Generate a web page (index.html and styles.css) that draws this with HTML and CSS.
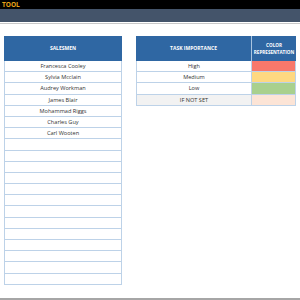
FILE: index.html
```html
<!DOCTYPE html>
<html>
<head>
<meta charset="utf-8">
<link rel="stylesheet" href="styles.css">
</head>
<body>
<div class="topbar">TOOL</div>
<div class="subbar"></div>
<div class="sep"></div>
<main class="sheet">
  <div class="salesmen">
    <div class="head">SALESMEN</div>
    <div class="row">Francesca Cooley</div>
    <div class="row">Sylvia Mcclain</div>
    <div class="row">Audrey Workman</div>
    <div class="row">James Blair</div>
    <div class="row">Mohammad Riggs</div>
    <div class="row">Charles Guy</div>
    <div class="row">Carl Wooten</div>
    <div class="row"></div>
    <div class="row"></div>
    <div class="row"></div>
    <div class="row"></div>
    <div class="row"></div>
    <div class="row"></div>
    <div class="row"></div>
    <div class="row"></div>
    <div class="row"></div>
    <div class="row"></div>
    <div class="row"></div>
    <div class="row"></div>
    <div class="row"></div>
  </div>
  <div class="importance">
    <div class="head">TASK IMPORTANCE</div>
    <div class="head color-head">COLOR<br>REPRESENTATION</div>
    <div class="cell">High</div><div class="swatch high"></div>
    <div class="cell">Medium</div><div class="swatch medium"></div>
    <div class="cell">Low</div><div class="swatch low"></div>
    <div class="cell notset">IF NOT SET</div><div class="swatch unset"></div>
  </div>
</main>
<div class="footer"></div>
</body>
</html>
```
FILE: styles.css
```css
html, body {
  margin: 0;
  padding: 0;
  width: 300px;
  height: 300px;
  overflow: hidden;
  background: #ffffff;
  font-family: "Open Sans", "Liberation Sans", sans-serif;
}
.topbar {
  height: 9px;
  background: #000000;
  color: #e8a317;
  font-size: 6.5px;
  font-weight: 700;
  line-height: 9px;
  padding-left: 2px;
  box-sizing: border-box;
}
.subbar {
  height: 13px;
  background: #44546a;
}
.sep {
  height: 1px;
  margin-top: 1px;
  background: #c8c8c8;
}
.sheet {
  height: 274px;
  box-sizing: border-box;
  padding: 12px 0 0 4px;
  display: flex;
  align-items: flex-start;
  gap: 14px;
}
.salesmen {
  width: 118px;
  display: flex;
  flex-direction: column;
  border-left: 1px solid #bdd2e8;
  border-right: 1px solid #bdd2e8;
  box-sizing: border-box;
}
.head {
  background: #2f67a3;
  color: #ffffff;
  font-size: 5px;
  font-weight: 700;
  height: 25px;
  display: flex;
  align-items: center;
  justify-content: center;
  text-align: center;
  line-height: 7px;
}
.salesmen .head {
  margin: 0 -1px;
}
.row {
  height: 11.2px;
  box-sizing: border-box;
  border-bottom: 1px solid #bdd2e8;
  font-size: 5.6px;
  color: #333333;
  display: flex;
  align-items: center;
  justify-content: center;
}
.importance {
  width: 160px;
  display: grid;
  grid-template-columns: 115px 45px;
  grid-auto-rows: 11.2px;
}
.importance .head {
  grid-row: span 1;
  height: 25px;
}
.importance {
  grid-template-rows: 25px;
}
.color-head {
  border-left: 1px solid #a9c4e0;
  font-size: 4.6px;
}
.cell {
  box-sizing: border-box;
  border-left: 1px solid #bdd2e8;
  border-bottom: 1px solid #bdd2e8;
  font-size: 5.6px;
  color: #333333;
  display: flex;
  align-items: center;
  justify-content: center;
}
.cell.notset {
  background: #f2f2f2;
}
.swatch {
  box-sizing: border-box;
  border-left: 1px solid #bdd2e8;
  border-right: 1px solid #bdd2e8;
  border-bottom: 1px solid #bdd2e8;
}
.high { background: #f8786b; }
.medium { background: #fed881; }
.low { background: #a9d08e; }
.unset { background: #fce4d6; }
.footer {
  height: 2px;
  background: #a6a6a6;
}
```
